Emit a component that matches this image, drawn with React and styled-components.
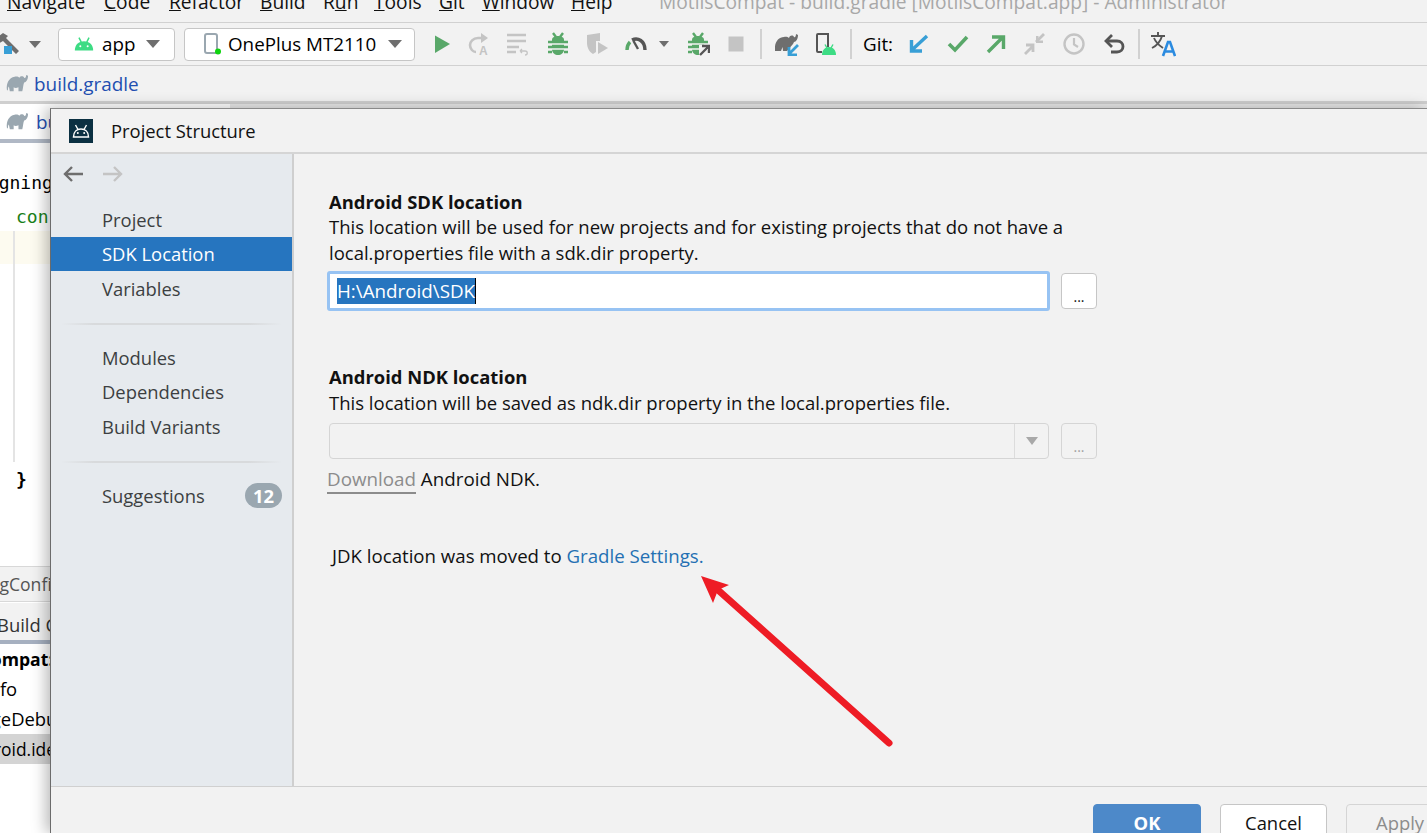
import React from "react";
import styled, { createGlobalStyle } from "styled-components";

const UI_FONT = `"Open Sans", "Noto Sans", "Liberation Sans", sans-serif`;
const MONO_FONT = `"DejaVu Sans Mono", "Liberation Mono", monospace`;

const GREEN = "#59a869";
const BLUE = "#389fd6";
const GREY = "#6e6e6e";
const OFF = "#c4c4c4";
const DROID = "#3ddc84";

const GlobalStyle = createGlobalStyle`
  html, body {
    margin: 0;
    padding: 0;
    background: #fff;
    overflow: hidden;
  }
  body {
    font-family: ${UI_FONT};
    font-size: 18.4px;
    color: #000;
  }
`;

const Page = styled.div`
  position: relative;
  width: 1427px;
  height: 833px;
  overflow: hidden;
  display: flex;
  flex-direction: column;
  background: #fff;
`;

/* ---- IDE behind the dialog ---- */

const MenuBar = styled.div`
  height: 14px;
  flex: none;
  display: flex;
  align-items: flex-end;
  padding: 0 0 8px 7px;
  background: #f2f2f2;
  border-bottom: 1px solid #d1d1d1;
  overflow: hidden;
  font-size: 19.2px;
  line-height: 24px;
`;
const Menu = styled.span`
  flex: none;
  width: ${(p) => p.$w}px;
  color: #111;
  white-space: nowrap;
`;
const Mnemonic = styled.span`
  text-decoration: underline;
`;
const WindowTitle = styled.span`
  flex: none;
  margin-left: 35px;
  color: #a8a8a8;
  white-space: nowrap;
`;

const Toolbar = styled.div`
  height: 42px;
  flex: none;
  display: flex;
  align-items: center;
  background: #f2f2f2;
  border-bottom: 1px solid #d1d1d1;
  font-size: 18.8px;
`;
const Glyph = styled.svg`
  flex: none;
  width: ${(p) => p.$size || 24}px;
  height: ${(p) => p.$size || 24}px;
  margin-left: ${(p) => p.$ml || 0}px;
`;
const Combo = styled.div`
  flex: none;
  box-sizing: border-box;
  width: ${(p) => p.$w}px;
  height: 33px;
  margin-left: ${(p) => p.$ml}px;
  padding: 0 13px 0 ${(p) => p.$pl}px;
  display: flex;
  align-items: center;
  gap: ${(p) => p.$gap}px;
  background: #fff;
  border: 1px solid #c6c6c6;
  border-radius: 4px;
  white-space: nowrap;
`;
const Caret = styled.span`
  flex: none;
  width: 0;
  height: 0;
  margin-left: ${(p) => p.$ml || 0}px;
  border-left: ${(p) => p.$w || 6}px solid transparent;
  border-right: ${(p) => p.$w || 6}px solid transparent;
  border-top: ${(p) => p.$h || 7}px solid ${(p) => p.$color || "#6e6e6e"};
`;
const ToolSep = styled.span`
  flex: none;
  width: 2px;
  height: 30px;
  margin-left: ${(p) => p.$ml}px;
  background: #d1d1d1;
`;
const ToolLabel = styled.span`
  flex: none;
  margin-left: ${(p) => p.$ml}px;
`;

const Breadcrumb = styled.div`
  height: 35px;
  flex: none;
  display: flex;
  align-items: center;
  gap: 5px;
  padding-left: 6px;
  background: #f2f2f2;
  border-bottom: 3px solid #cfcfcf;
  color: #1f4fb0;
  font-size: 18.9px;
`;
const TabStrip = styled.div`
  height: 35px;
  flex: none;
  display: flex;
  align-items: center;
  gap: 7px;
  padding-left: 6px;
  background: linear-gradient(90deg, #fff 230px, #e9e9e9 230px);
  border-bottom: 4px solid #b0b8c5;
  color: #1f4fb0;
  font-size: 18.9px;
  white-space: nowrap;
`;

const Editor = styled.div`
  height: 400px;
  flex: none;
  padding-top: 23px;
  background: #fff;
  font-family: ${MONO_FONT};
  font-size: 18px;
`;
const CodeLine = styled.div`
  height: ${(p) => p.$h || 34}px;
  line-height: ${(p) => p.$h || 34}px;
  white-space: nowrap;
  overflow: hidden;
  text-indent: ${(p) => p.$indent || 0}px;
  color: ${(p) => p.$color || "#000"};
  font-weight: ${(p) => p.$weight || 400};
`;
const CurrentLine = styled.div`
  height: 33px;
  margin-top: -3px;
  background: #fdfbf0;
`;
const IndentGuide = styled.div`
  height: ${(p) => p.$h}px;
  margin-left: 13px;
  border-left: 2px solid #e4e4e4;
`;

const ToolTabs = styled.div`
  height: 36px;
  flex: none;
  box-sizing: border-box;
  line-height: 34px;
  background: #f2f2f2;
  border-top: 1px solid #d8d8d8;
  border-bottom: 1px solid #d8d8d8;
  color: #555;
  font-size: 17.6px;
  white-space: nowrap;
  text-indent: ${(p) => p.$indent}px;
  overflow: hidden;
`;
const BuildTab = styled(ToolTabs)`
  height: 41px;
  margin-top: 1px;
  border-top: 0;
  border-bottom: 4px solid #a6b0c0;
  line-height: 44px;
  font-size: 18.4px;
  color: #333;
`;
const BuildRow = styled.div`
  height: 30px;
  line-height: 30px;
  white-space: nowrap;
  overflow: hidden;
  text-indent: ${(p) => p.$indent}px;
  font-size: ${(p) => p.$size || 18.4}px;
  font-weight: ${(p) => p.$weight || 400};
  background: ${(p) => p.$bg || "transparent"};
`;

/* ---- Project Structure dialog ---- */

const Dialog = styled.div`
  position: absolute;
  left: 50px;
  top: 108px;
  right: 0;
  bottom: 0;
  display: flex;
  flex-direction: column;
  background: #f2f2f2;
  border-left: 1px solid #6b6b6b;
  border-top: 1px solid #8a8a8a;
  box-shadow: -4px 0 14px rgba(0, 0, 0, 0.28);
`;
const TitleBar = styled.div`
  height: 43px;
  flex: none;
  display: flex;
  align-items: center;
  gap: 18px;
  padding-left: 18px;
  border-bottom: 2px solid #d5d5d5;
  color: #111;
`;
const Body = styled.div`
  height: 632px;
  flex: none;
  display: flex;
  border-bottom: 1px solid #d0d0d0;
`;
const Sidebar = styled.div`
  width: 241px;
  flex: none;
  background: #e6eaee;
  border-right: 2px solid #cfcfcf;
`;
const NavArrows = styled.div`
  height: 48px;
  display: flex;
  align-items: center;
  gap: 10px;
  padding: 0 0 8px 11px;
  box-sizing: border-box;
`;
const NavItem = styled.div`
  height: 34.5px;
  display: flex;
  align-items: center;
  justify-content: space-between;
  padding: 0 10px 0 51px;
  color: ${(p) => (p.$active ? "#fff" : "#3c3f41")};
  background: ${(p) => (p.$active ? "#2675bf" : "transparent")};
`;
const NavDivider = styled.div`
  height: 2px;
  margin: 17px 10px 15.5px 10px;
  background: linear-gradient(90deg, #e6eaee, #d8dadc 15%, #d8dadc 85%, #e6eaee);
`;
const Badge = styled.span`
  width: 37px;
  height: 25px;
  display: flex;
  align-items: center;
  justify-content: center;
  border-radius: 13px;
  background: #9aa7b0;
  color: #fff;
  font-weight: 700;
`;

const Content = styled.div`
  flex: 1;
  padding: 36px 0 0 35px;
  color: #111;
  font-size: 18.5px;
`;
const SectionTitle = styled.div`
  height: ${(p) => p.$h}px;
  margin-top: ${(p) => p.$mt || 0}px;
  line-height: 24px;
  font-size: 18.4px;
  font-weight: 700;
`;
const Desc = styled.div`
  line-height: 26px;
  width: 760px;
`;
const FieldRow = styled.div`
  display: flex;
  align-items: center;
  gap: 12px;
  margin-top: ${(p) => p.$mt}px;
`;
const FocusField = styled.div`
  box-sizing: border-box;
  width: 723px;
  height: 40px;
  margin: 0 -1px 0 -2px;
  padding-left: 7px;
  display: flex;
  align-items: center;
  background: #fff;
  border: 3px solid #97c3f3;
  border-radius: 3px;
  font-size: 18.8px;
`;
const Selected = styled.span`
  background: #2675bf;
  color: #fff;
  line-height: 26px;
  border-right: 1px solid #000;
`;
const EllipsisButton = styled.div`
  box-sizing: border-box;
  width: 36px;
  height: 36px;
  display: flex;
  align-items: flex-end;
  justify-content: center;
  padding-bottom: 4px;
  background: ${(p) => (p.$off ? "#f2f2f2" : "#fff")};
  border: 1px solid ${(p) => (p.$off ? "#d5d5d5" : "#c6c6c6")};
  border-radius: 4px;
  color: ${(p) => (p.$off ? "#a0a0a0" : "#111")};
  font-size: 14px;
  line-height: 14px;
`;
const DisabledCombo = styled.div`
  box-sizing: border-box;
  width: 720px;
  height: 36px;
  display: flex;
  justify-content: flex-end;
  background: #f2f2f2;
  border: 1px solid #d5d5d5;
  border-radius: 4px;
`;
const ComboArrow = styled.div`
  width: 33px;
  display: flex;
  align-items: center;
  justify-content: center;
  border-left: 1px solid #dcdcdc;
`;
const DownloadLine = styled.div`
  margin-top: 7px;
  line-height: 26px;
  font-size: 18.8px;
`;
const DisabledLink = styled.span`
  color: #8c8c8c;
  border-bottom: 2px solid #8c8c8c;
  margin-left: -2px;
`;
const JdkLine = styled.div`
  margin: 51px 0 0 3px;
  line-height: 26px;
  font-size: 18.65px;
`;
const LinkText = styled.span`
  color: #2470b3;
`;
const Footer = styled.div`
  flex: 1;
  display: flex;
  gap: 19px;
  padding: 17px 0 0 1042px;
`;
const DialogButton = styled.div`
  flex: none;
  box-sizing: border-box;
  width: ${(p) => p.$w || 108}px;
  height: 50px;
  display: flex;
  justify-content: center;
  padding-top: 5px;
  line-height: 26px;
  border-radius: 4px;
  border: 1px solid
    ${(p) => (p.$primary ? "#4d89c9" : p.$off ? "#d5d5d5" : "#c6c6c6")};
  background: ${(p) =>
    p.$primary ? "#4d89c9" : p.$off ? "#f2f2f2" : "#fff"};
  color: ${(p) => (p.$primary ? "#fff" : p.$off ? "#8c8c8c" : "#111")};
  font-weight: ${(p) => (p.$primary ? 700 : 400)};
`;
const Annotation = styled.svg`
  position: absolute;
  left: 690px;
  top: 565px;
  width: 210px;
  height: 190px;
  pointer-events: none;
`;

/* ---- drawings ---- */

const Elephant = ({ color = "#9aa7b0", ...rest }) => (
  <Glyph viewBox="0 0 24 20" $size={23} {...rest}>
    <path
      fill={color}
      d="M1 17 C0 10 3 4 9 3 C11 2.5 13 3 14 4 C15 2 18 2 19 4 C20 5 21 3 21 1 L23 2 C23 6 21 9 19 9 C18 11 18 14 17 18 L13 18 L13 14 C11 15 9 15 8 14 L8 18 L4 18 L3 13 C2 14 2 16 2 17 Z"
    />
  </Glyph>
);

const DroidHead = ({ color = DROID, ...rest }) => (
  <Glyph viewBox="0 0 24 24" $size={22} {...rest}>
    <path fill={color} d="M2 19 C2 13 6 9 12 9 C18 9 22 13 22 19 Z" />
    <path stroke={color} strokeWidth="1.6" d="M6.5 5 L9 10 M17.5 5 L15 10" />
    <circle cx="8" cy="14.5" r="1.1" fill="#fff" />
    <circle cx="16" cy="14.5" r="1.1" fill="#fff" />
  </Glyph>
);

const Hammer = (props) => (
  <Glyph viewBox="0 0 24 24" {...props}>
    <path fill={GREY} d="M-6 8 L3 1 L8 4 L6 6 L19 19 L16 22 L3 9 L-2 12 Z" />
    <rect x="4" y="14" width="8" height="8" fill={BLUE} />
  </Glyph>
);

const Phone = (props) => (
  <Glyph viewBox="0 0 24 24" {...props}>
    <rect x="5" y="2" width="12" height="19" rx="2" fill="none" stroke="#9aa7b0" strokeWidth="2" />
    <circle cx="18" cy="19.5" r="3" fill="#0fd40f" />
  </Glyph>
);

const Play = (props) => (
  <Glyph viewBox="0 0 24 24" {...props}>
    <path fill={GREEN} d="M5 3.5 L20 12 L5 21 Z" />
  </Glyph>
);

const Rerun = (props) => (
  <Glyph viewBox="0 0 24 24" {...props}>
    <path fill="none" stroke={OFF} strokeWidth="2.6" d="M16 6 L11 6 C6 6 3 10 3 13 C3 17 6 20 9 20" />
    <path fill={OFF} d="M14 1 L21 6 L14 11 Z" />
    <text x="12" y="23" fontSize="12" fontWeight="700" fill={OFF} fontFamily="Liberation Sans">A</text>
  </Glyph>
);

const RunList = (props) => (
  <Glyph viewBox="0 0 24 24" {...props}>
    <path stroke={OFF} strokeWidth="2.6" d="M2 3 H21 M2 9 H21 M2 15 H14 M2 20 H11" />
    <path fill="none" stroke={OFF} strokeWidth="1.3" d="M15 19 H20 C23 19 23 23 20 23 M15 19 L17 17 M15 19 L17 21" />
  </Glyph>
);

const Bug = ({ overlay, ...rest }) => (
  <Glyph viewBox="0 0 24 24" {...rest}>
    <path stroke={GREEN} strokeWidth="2.4" d="M7 1 L10 5 M17 1 L14 5 M2 10 H6 M18 10 H22 M2 15 H6 M2 20 H6" />
    {!overlay && <path stroke={GREEN} strokeWidth="2.4" d="M18 15 H22 M18 20 H22" />}
    <path fill={GREEN} d="M6 8 C6 5 9 4 12 4 C15 4 18 5 18 8 L18 17 C18 21 15 23 12 23 C9 23 6 21 6 17 Z" />
    <path stroke="#f2f2f2" strokeWidth="1.6" d="M6 12 H18 M6 17 H18" />
    {overlay && (
      <>
        <rect x="13" y="13" width="11" height="11" fill="#f2f2f2" />
        <path stroke="#555" strokeWidth="2.4" fill="none" d="M14 23 L22 15 M16 14 H23 V21" />
      </>
    )}
  </Glyph>
);

const ProfileShield = (props) => (
  <Glyph viewBox="0 0 24 24" {...props}>
    <path fill={OFF} d="M2 3 L15 1 L15 9 L11 9 L11 20 L8 22 C4 20 2 15 2 11 Z" />
    <path fill={OFF} d="M13 10 L23 16 L13 22 Z" />
  </Glyph>
);

const Gauge = (props) => (
  <Glyph viewBox="0 0 24 24" {...props}>
    <path fill="none" stroke={GREEN} strokeWidth="3.4" d="M3 18 C3 14 4 12 6 10" />
    <path fill="none" stroke="#555" strokeWidth="3.4" d="M8 8 C14 5 21 9 21 18" />
    <path stroke="#555" strokeWidth="2.4" d="M9.5 9 L14 17" />
  </Glyph>
);

const Stop = (props) => (
  <Glyph viewBox="0 0 24 24" {...props}>
    <rect x="4.5" y="4.5" width="15" height="15" fill={OFF} />
  </Glyph>
);

const GradleSync = (props) => (
  <Glyph viewBox="0 0 24 24" {...props}>
    <path fill={GREY} d="M0 19 C-1 11 3 5 9 5 C11 4.5 13 5 14 6 C15 3 18 3 19 5 C20 6 21 4 21 2 L23 3 C23 7 21 10 19 10 L18 12 L12 19 L8 19 L7.5 15 L6 19 L3 19 Z" />
    <path stroke={BLUE} strokeWidth="2.8" fill="none" d="M23 13 L14 22 M14 15 V23 H22" />
  </Glyph>
);

const AvdManager = (props) => (
  <Glyph viewBox="0 0 24 24" {...props}>
    <path fill="none" stroke="#555" strokeWidth="2" d="M15 15 V2 H5 A1 1 0 0 0 4 3 V19 A1 1 0 0 0 5 20 H9" />
    <path fill={DROID} d="M9 23 C9 18 12 15 16 15 C20 15 23 18 23 23 Z" />
    <path stroke={DROID} strokeWidth="1.4" d="M12 12.5 L14 16 M20 12.5 L18 16" />
  </Glyph>
);

const ArrowGlyph = ({ color, d, fat = 3.4, ...rest }) => (
  <Glyph viewBox="0 0 24 24" {...rest}>
    <path fill="none" stroke={color} strokeWidth={fat} d={d} />
  </Glyph>
);

const Merge = (props) => (
  <Glyph viewBox="0 0 24 24" {...props}>
    <path stroke={OFF} strokeWidth="2.8" fill="none" d="M3 22 L11 14 M4 13 H11 V20 M22 2 L14 10" />
    <path fill={OFF} d="M14 4 L14 11 L21 11 L21 8.5 L16.5 8.5 L16.5 4 Z" />
  </Glyph>
);

const Clock = (props) => (
  <Glyph viewBox="0 0 24 24" {...props}>
    <circle cx="12" cy="12" r="9.5" fill="none" stroke={OFF} strokeWidth="2.4" />
    <path fill="none" stroke={OFF} strokeWidth="2.2" d="M12 6 V12.5 L16 15" />
  </Glyph>
);

const Undo = (props) => (
  <Glyph viewBox="0 0 24 24" {...props}>
    <path fill="none" stroke="#555" strokeWidth="2.8" d="M5 9 H15 C23 9 23 20 15 20 H9" />
    <path fill="none" stroke="#555" strokeWidth="2.8" d="M10 3 L4 9 L10 15" />
  </Glyph>
);

const Translate = (props) => (
  <Glyph viewBox="0 0 26 26" $size={26} {...props}>
    <path fill="none" stroke="#555" strokeWidth="1.9" d="M1 5 H15 M8 1 V5 M12 5 C10 12 6 15 2 17 M4 7 C6 12 10 15 13 17" />
    <path fill="none" stroke="#2b8be0" strokeWidth="2.6" d="M13 25 L18 11 L20 11 L25 25 M15 20.5 H23" />
  </Glyph>
);

const NavBack = ({ color }) => (
  <Glyph viewBox="0 0 22 18" $size={22}>
    <path fill="none" stroke={color} strokeWidth="2.4" d="M21 9 H3 M10 2 L3 9 L10 16" />
  </Glyph>
);

const NavForward = ({ color }) => (
  <Glyph viewBox="0 0 22 18" $size={22} $ml={8}>
    <path fill="none" stroke={color} strokeWidth="2.4" d="M1 9 H19 M12 2 L19 9 L12 16" />
  </Glyph>
);

const DialogIcon = () => (
  <Glyph viewBox="0 0 24 24">
    <rect width="24" height="24" fill="#0b3042" />
    <path fill="none" stroke="#fff" strokeWidth="1.5" d="M4.5 18 C4.5 12.5 8 10 12 10 C16 10 19.5 12.5 19.5 18 Z" />
    <path stroke="#fff" strokeWidth="1.4" d="M6.5 6 L9 10.5 M17.5 6 L15 10.5" />
    <circle cx="8.8" cy="14" r="1" fill="#fff" />
    <circle cx="15.2" cy="14" r="1" fill="#fff" />
  </Glyph>
);

const menus = [
  ["", "N", "avigate", 97],
  ["", "C", "ode", 65],
  ["", "R", "efactor", 91],
  ["", "B", "uild", 63],
  ["R", "u", "n", 51],
  ["", "T", "ools", 65],
  ["", "G", "it", 43],
  ["", "W", "indow", 89],
  ["", "H", "elp", 53],
];

const App = () => (
  <Page>
    <GlobalStyle />

    <MenuBar>
      {menus.map(([before, key, after, w]) => (
        <Menu key={before + key + after} $w={w}>
          {before}
          <Mnemonic>{key}</Mnemonic>
          {after}
        </Menu>
      ))}
      <WindowTitle>MotilsCompat - build.gradle [MotilsCompat.app] - Administrator</WindowTitle>
    </MenuBar>

    <Toolbar>
      <Hammer />
      <Caret $ml={5} />
      <Combo $w={117} $ml={17} $pl={14} $gap={7}>
        <DroidHead />
        app
        <Caret $ml={4} $w={7} $h={8} />
      </Combo>
      <Combo $w={231} $ml={9} $pl={15} $gap={4}>
        <Phone />
        OnePlus MT2110
        <Caret $ml={8} $w={7} $h={8} />
      </Combo>
      <Play $ml={15} />
      <Rerun $ml={13} />
      <RunList $ml={14} />
      <Bug $ml={17} />
      <ProfileShield $ml={15} />
      <Gauge $ml={15} />
      <Caret $ml={11} $w={5} $h={6} />
      <Bug overlay $ml={17} />
      <Stop $ml={14} />
      <ToolSep $ml={12} />
      <GradleSync $ml={13} />
      <AvdManager $ml={14} />
      <ToolSep $ml={13} />
      <ToolLabel $ml={11}>Git:</ToolLabel>
      <ArrowGlyph $ml={12} color={BLUE} d="M22 4 L8 17 M6.5 8 V19 H17" />
      <ArrowGlyph $ml={17} color={GREEN} fat={3.6} d="M3 12 L9 18 L21 5" />
      <ArrowGlyph $ml={14} color={GREEN} d="M4 20 L18 6 M8 5 H19.5 V17" />
      <Merge $ml={14} />
      <Clock $ml={16} />
      <Undo $ml={16} />
      <ToolSep $ml={12} />
      <Translate $ml={10} />
    </Toolbar>

    <Breadcrumb>
      <Elephant />
      build.gradle
    </Breadcrumb>

    <TabStrip>
      <Elephant />
      build.gradle
    </TabStrip>

    <Editor>
      <CodeLine $indent={-23}>signingConfigs</CodeLine>
      <CodeLine $indent={16} $color="#1a7f1a">config</CodeLine>
      <CurrentLine>
        <IndentGuide $h={33} />
      </CurrentLine>
      <IndentGuide $h={198} />
      <CodeLine $h={36} $indent={16} $weight={700}>{"}"}</CodeLine>
    </Editor>

    <ToolTabs $indent={-49}>signingConfigs</ToolTabs>
    <BuildTab $indent={-3}>Build Console</BuildTab>
    <BuildRow $indent={-75} $weight={700} $size={17.6}>MotilsCompat:</BuildRow>
    <BuildRow $indent={-16}>info</BuildRow>
    <BuildRow $indent={-44}>mergeDebug</BuildRow>
    <BuildRow $indent={-37} $size={17.4} $bg="#d4d4d4">android.ide</BuildRow>

    <Dialog>
      <TitleBar>
        <DialogIcon />
        Project Structure
      </TitleBar>
      <Body>
        <Sidebar>
          <NavArrows>
            <NavBack color={GREY} />
            <NavForward color={OFF} />
          </NavArrows>
          <NavItem>Project</NavItem>
          <NavItem $active>SDK Location</NavItem>
          <NavItem>Variables</NavItem>
          <NavDivider />
          <NavItem>Modules</NavItem>
          <NavItem>Dependencies</NavItem>
          <NavItem>Build Variants</NavItem>
          <NavDivider />
          <NavItem>
            Suggestions
            <Badge>12</Badge>
          </NavItem>
        </Sidebar>
        <Content>
          <SectionTitle $h={24}>Android SDK location</SectionTitle>
          <Desc>
            This location will be used for new projects and for existing projects that do not have a
            local.properties file with a sdk.dir property.
          </Desc>
          <FieldRow $mt={5}>
            <FocusField>
              <Selected>H:\Android\SDK</Selected>
            </FocusField>
            <EllipsisButton>...</EllipsisButton>
          </FieldRow>
          <SectionTitle $h={25} $mt={54}>Android NDK location</SectionTitle>
          <Desc>This location will be saved as ndk.dir property in the local.properties file.</Desc>
          <FieldRow $mt={7}>
            <DisabledCombo>
              <ComboArrow>
                <Caret $w={6} $h={8} $color="#a8a8a8" />
              </ComboArrow>
            </DisabledCombo>
            <EllipsisButton $off>...</EllipsisButton>
          </FieldRow>
          <DownloadLine>
            <DisabledLink>Download</DisabledLink> Android NDK.
          </DownloadLine>
          <JdkLine>
            JDK location was moved to <LinkText>Gradle Settings.</LinkText>
          </JdkLine>
        </Content>
      </Body>
      <Footer>
        <DialogButton $primary>OK</DialogButton>
        <DialogButton $w={107}>Cancel</DialogButton>
        <DialogButton $off>Apply</DialogButton>
      </Footer>
    </Dialog>

    <Annotation viewBox="690 565 210 190">
      <path stroke="#ee1c25" strokeWidth="7" strokeLinecap="round" d="M889 743 L718 590" />
      <path fill="#ee1c25" d="M701 576 L729 585 L718 590 L713 603 Z" />
    </Annotation>
  </Page>
);

export default App;
